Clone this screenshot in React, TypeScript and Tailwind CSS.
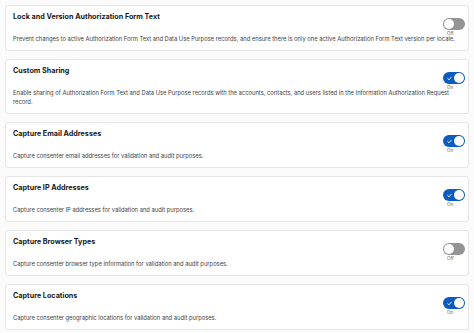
import { useState } from 'react';

interface Setting {
  id: string;
  title: string;
  description: string;
  enabled: boolean;
}

const SETTINGS: Setting[] = [
  {
    id: 'lock',
    title: 'Lock and Version Authorization Form Text',
    description:
      'Prevent changes to active Authorization Form Text and Data Use Purpose records, and ensure there is only one active Authorization Form Text version per locale.',
    enabled: false,
  },
  {
    id: 'sharing',
    title: 'Custom Sharing',
    description:
      'Enable sharing of Authorization Form Text and Data Use Purpose records with the accounts, contacts, and users listed in the Information Authorization Request record.',
    enabled: true,
  },
  {
    id: 'email',
    title: 'Capture Email Addresses',
    description: 'Capture consenter email addresses for validation and audit purposes.',
    enabled: true,
  },
  {
    id: 'ip',
    title: 'Capture IP Addresses',
    description: 'Capture consenter IP addresses for validation and audit purposes.',
    enabled: true,
  },
  {
    id: 'browser',
    title: 'Capture Browser Types',
    description: 'Capture consenter browser type information for validation and audit purposes.',
    enabled: false,
  },
  {
    id: 'location',
    title: 'Capture Locations',
    description: 'Capture consenter geographic locations for validation and audit purposes.',
    enabled: true,
  },
];

function Toggle({ on, onClick }: { on: boolean; onClick: () => void }) {
  return (
    <div className="absolute top-[12px] right-[3px] flex flex-col items-start">
      <button
        onClick={onClick}
        aria-pressed={on}
        className={`relative h-[12px] w-[22px] rounded-full ${on ? 'bg-[#0b5cc0]' : 'bg-[#949494]'}`}
      >
        {on && (
          <svg
            className="absolute top-[3.5px] left-[4px] h-[5px] w-[5px]"
            viewBox="0 0 10 10"
            fill="none"
            stroke="white"
            strokeWidth="1.8"
            strokeLinecap="round"
            strokeLinejoin="round"
          >
            <path d="M1.5 5.2 L4 7.6 L8.6 2.4" />
          </svg>
        )}
        <span
          className={`absolute top-[1px] h-[10px] w-[10px] rounded-full bg-white ${on ? 'right-[1px]' : 'left-[1px]'}`}
        />
      </button>
      <span className="mt-[1px] pl-[4px] text-[4.5px] leading-[6px] text-[#555]">
        {on ? 'On' : 'Off'}
      </span>
    </div>
  );
}

export default function App() {
  const [settings, setSettings] = useState(SETTINGS);

  const toggle = (id: string) =>
    setSettings((prev) => prev.map((s) => (s.id === id ? { ...s, enabled: !s.enabled } : s)));

  return (
    <div
      className="flex h-[333px] w-[474px] flex-col gap-[8px] overflow-hidden bg-[#fbfbfb] px-[5px] pt-[5px]"
      style={{ fontFamily: 'Inter, "Liberation Sans", sans-serif' }}
    >
      {settings.map((s) => (
        <section
          key={s.id}
          className="relative rounded-[3px] border border-[#e6e6e6] bg-white pt-[6px] pr-[7px] pb-[7px] pl-[7px]"
        >
          <h2 className="text-[7.2px] leading-[10px] font-bold text-[#181818]">{s.title}</h2>
          <p className="mt-[12px] text-[5.8px] leading-[9px] text-[#3e3e3e]">{s.description}</p>
          <Toggle on={s.enabled} onClick={() => toggle(s.id)} />
        </section>
      ))}
    </div>
  );
}
